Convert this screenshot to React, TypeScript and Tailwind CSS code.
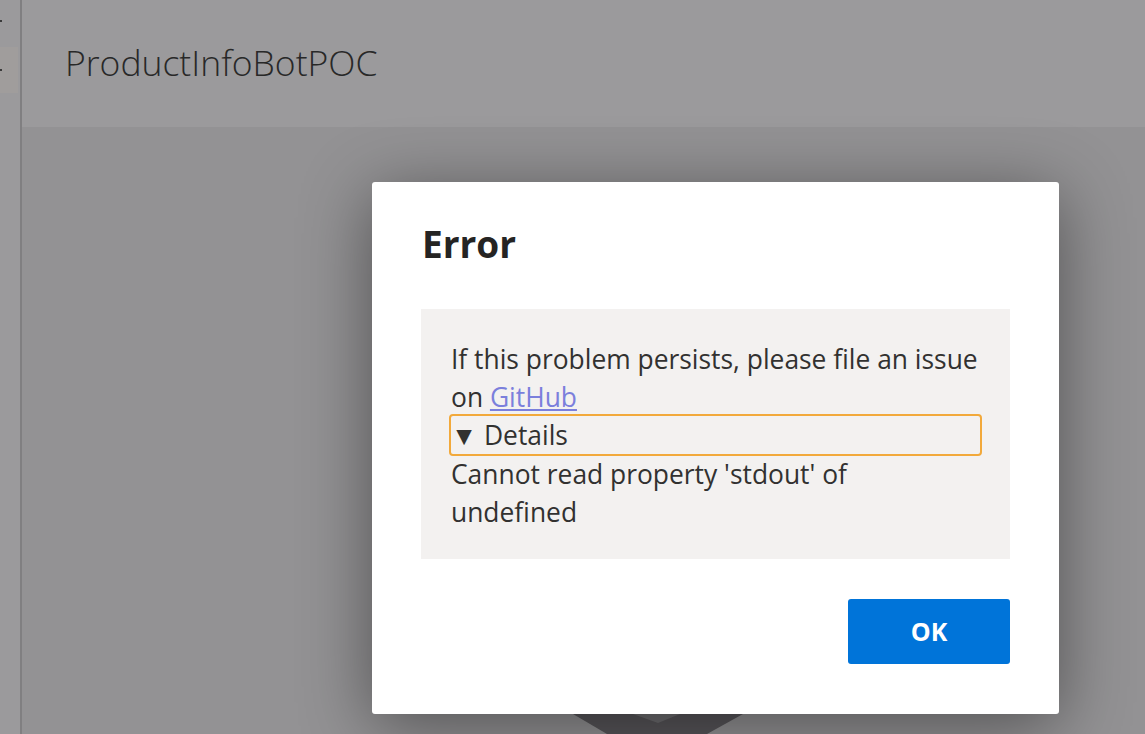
const FONT = "font-['Open_Sans','Noto_Sans',sans-serif]";

const Sidebar = () => (
  <div className="relative w-[20px] shrink-0 bg-[#9b9a9c]">
    <div className="absolute left-0 top-[20px] h-[2px] w-[2px] bg-[#3a3a3a]" />
    <div className="mt-[47px] h-[46px] w-[18px] bg-[#a09d9c]" />
    <div className="absolute left-0 top-[69px] h-[2px] w-[2px] bg-[#3a3a3a]" />
  </div>
);

const ErrorDialog = () => (
  <div
    className={`absolute left-[372px] top-[182px] flex h-[532px] w-[687px] flex-col rounded-[3px] bg-white px-[49px] pt-[38px] shadow-[0_12px_70px_rgba(0,0,0,0.45)] ${FONT}`}
  >
    <h1 className="pl-[1px] text-[37px] font-bold leading-[48px] text-[#252423]">Error</h1>
    <div className="mt-[41px] bg-[#f3f1f0] px-[30px] pb-[28px] pt-[31px] text-[26.4px] leading-[38px] text-[#323130]">
      <p>
        If this problem persists, please file an issue on{' '}
        <a className="text-[#7b7fdc] underline decoration-[#7b7fdc]">GitHub</a>
      </p>
      <div className="rounded-[2px] outline-2 outline-[#f2a93b]">▼ Details</div>
      <p className="mt-[1px] pr-[30px]">Cannot read property 'stdout' of undefined</p>
    </div>
    <div className="mt-[40px] flex justify-end">
      <button className="h-[65px] w-[162px] rounded-[3px] bg-[#0074d9] text-[25px] font-bold text-white">
        OK
      </button>
    </div>
  </div>
);

export default function App() {
  return (
    <div className="relative flex h-[734px] w-full overflow-hidden bg-[#939294]">
      <Sidebar />
      <div className="w-[2px] shrink-0 bg-[#807f81]" />
      <div className="flex flex-1 flex-col">
        <header className={`flex h-[127px] items-center bg-[#9b9a9c] pl-[43px] pb-[1px] ${FONT}`}>
          <span className="text-[35.5px] font-light text-[#282828]">ProductInfoBotPOC</span>
        </header>
        <main className="flex-1 bg-[#939294]" />
      </div>
      <svg className="absolute left-[560px] top-[700px]" width="200" height="34" viewBox="0 0 200 34">
        <polygon points="13,14 183,14 147,34 47,34" fill="#58565a" />
        <polygon points="73,14 120,14 98,23" fill="#6e6d70" />
      </svg>
      <ErrorDialog />
    </div>
  );
}
